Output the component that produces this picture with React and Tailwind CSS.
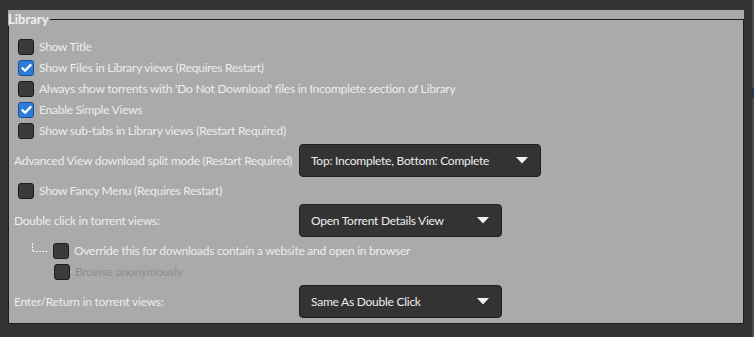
import React from 'react';

const FONT = { fontFamily: 'Lato, "Noto Sans", sans-serif' };

function Checkbox({ checked }) {
  if (checked) {
    return (
      <span className="flex h-4 w-4 shrink-0 items-center justify-center rounded-[3px] border border-[#1d4f8f] bg-[#2e7bd9]">
        <svg viewBox="0 0 16 16" className="h-[13px] w-[13px]">
          <path d="M2.2 8.2 L6.2 12 L13.8 4.2" fill="none" stroke="#ffffff" strokeWidth="2.8" />
        </svg>
      </span>
    );
  }
  return <span className="block h-4 w-4 shrink-0 rounded-[3px] border border-[#1b1b1b] bg-[#3b3b3b]" />;
}

function CheckRow({ label, checked, disabled }) {
  return (
    <div className="flex h-[21px] items-center gap-[5px] whitespace-nowrap">
      <Checkbox checked={checked} />
      <span className={disabled ? 'text-[#8e8e8e]' : 'text-[#ededed]'}>{label}</span>
    </div>
  );
}

function Dropdown({ value, width }) {
  return (
    <div
      className={`flex h-[33px] items-center justify-between whitespace-nowrap rounded-[4px] border border-[#1f1f1f] bg-[#333333] pl-[11px] pr-[12px] text-[#ededed] ${width}`}
    >
      <span>{value}</span>
      <svg viewBox="0 0 12 7" className="h-[7px] w-[12px]">
        <path d="M0 0 H12 L6 6.5 Z" fill="#f2f2f2" />
      </svg>
    </div>
  );
}

function SelectRow({ label, value, width }) {
  return (
    <div className="flex h-[39px] items-center pl-[5px]">
      <span className="w-[285px] shrink-0 whitespace-nowrap text-[#ededed]">{label}</span>
      <Dropdown value={value} width={width} />
    </div>
  );
}

export default function App() {
  return (
    <div className="relative h-[337px] w-[754px] overflow-hidden bg-[#333333] pl-[8px] pt-[10px] text-[12px] leading-none tracking-[-0.25px]" style={FONT}>
      <div className="relative h-[314px] w-[736px] bg-[#aaaaaa] pt-[9px]">
        <span className="absolute left-0 top-[3px] bg-[#aaaaaa] pr-[1px] text-[13px] font-bold tracking-normal text-[#f0f0f0]">Library</span>
        <div className="h-[305px] w-[736px] border border-[#1c1c1c] pt-[16px]">
          <div className="flex flex-col pl-[9px]">
            <CheckRow label="Show Title" />
            <CheckRow label="Show Files in Library views (Requires Restart)" checked />
            <CheckRow label="Always show torrents with 'Do Not Download' files in Incomplete section of Library" />
            <CheckRow label="Enable Simple Views" checked />
            <CheckRow label="Show sub-tabs in Library views (Restart Required)" />
          </div>
          <SelectRow label="Advanced View download split mode (Restart Required)" value="Top: Incomplete, Bottom: Complete" width="w-[242px]" />
          <div className="pl-[9px]">
            <CheckRow label="Show Fancy Menu (Requires Restart)" />
          </div>
          <SelectRow label="Double click in torrent views:" value="Open Torrent Details View" width="w-[203px]" />
          <div className="flex h-[21px] items-center pl-[23px]">
            <svg viewBox="0 0 15 9" className="mb-[6px] mr-[6px] h-[9px] w-[15px]">
              <path d="M0.5 0 V8.5 H15" fill="none" stroke="#f4f4f4" strokeWidth="1" strokeDasharray="2 1" />
            </svg>
            <CheckRow label="Override this for downloads contain a website and open in browser" />
          </div>
          <div className="pl-[45px]">
            <CheckRow label="Browse anonymously" disabled />
          </div>
          <SelectRow label="Enter/Return in torrent views:" value="Same As Double Click" width="w-[203px]" />
        </div>
      </div>
      <div className="absolute right-0 top-0 h-full w-[2px] bg-[#4a4a4a]" />
      <div className="absolute right-0 top-[88px] h-[10px] w-[2px] bg-[#23364d]" />
    </div>
  );
}
